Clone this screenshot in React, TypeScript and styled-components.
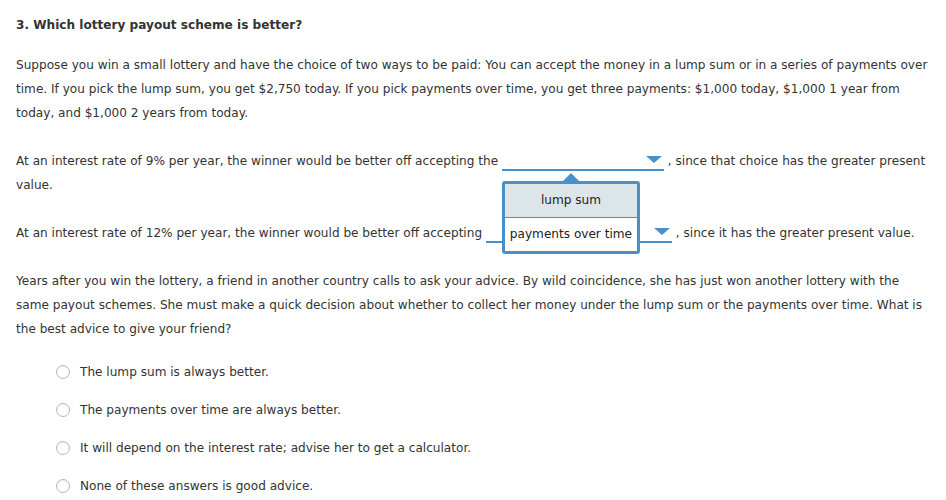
import * as React from "react";
import styled, { createGlobalStyle } from "styled-components";

const GlobalStyle = createGlobalStyle`
    html, body {
        margin: 0;
        padding: 0;
        background: #ffffff;
    }
    body {
        font-family: "DejaVu Sans", Verdana, sans-serif;
        font-size: 12.1px;
        color: #333333;
    }
`

const answers = [
    "The lump sum is always better.",
    "The payments over time are always better.",
    "It will depend on the interest rate; advise her to get a calculator.",
    "None of these answers is good advice."
];

interface DropdownProps {
    width: number;
    open?: boolean;
    options?: string[];
}

function Dropdown(props: DropdownProps) {
    return (
        <DropdownSpan $width={props.width}>
            <Caret />
            {props.open && props.options &&
                <Menu>
                    {props.options.map((o, i) => (
                        <MenuItem key={o} $selected={i === 0}>{o}</MenuItem>
                    ))}
                </Menu>
            }
        </DropdownSpan>
    );
}

export default class App extends React.Component {
    public render() {
        return (
            <Page>
                <GlobalStyle />
                <Title>3. Which lottery payout scheme is better?</Title>

                <Para>
                    Suppose you win a small lottery and have the choice of two ways to be paid: You can accept the money in a lump sum or in a series of payments over time. If you pick the lump sum, you get $2,750 today. If you pick payments over time, you get three payments: $1,000 today, $1,000 1 year from today, and $1,000 2 years from today.
                </Para>

                <Para>
                    At an interest rate of 9% per year, the winner would be better off accepting the{" "}
                    <Dropdown width={162} open options={["lump sum", "payments over time"]} />
                    {" "}, since that choice has the greater present value.
                </Para>

                <Para>
                    At an interest rate of 12% per year, the winner would be better off accepting{" "}
                    <Dropdown width={186} />
                    {" "}, since it has the greater present value.
                </Para>

                <Para>
                    Years after you win the lottery, a friend in another country calls to ask your advice. By wild coincidence, she has just won another lottery with the same payout schemes. She must make a quick decision about whether to collect her money under the lump sum or the payments over time. What is the best advice to give your friend?
                </Para>

                <AnswerList>
                    {answers.map(a => (
                        <AnswerRow key={a}>
                            <Radio />
                            <span>{a}</span>
                        </AnswerRow>
                    ))}
                </AnswerList>
            </Page>
        );
    }
}

const Page = styled.div`
    padding: 13px 16px 0 16px;
    width: 914px;
    line-height: 24px;
`

const Title = styled.div`
    font-weight: bold;
    margin-bottom: 16px;
`

const Para = styled.div`
    margin-bottom: 24px;
`

const DropdownSpan = styled.span<{ $width: number }>`
    position: relative;
    display: inline-block;
    vertical-align: -6px;
    width: ${p => p.$width}px;
    height: 16px;
    border-bottom: 2px solid #4a90c8;
`

const Caret = styled.span`
    position: absolute;
    right: 2px;
    top: 3px;
    width: 0;
    height: 0;
    border-left: 8px solid transparent;
    border-right: 8px solid transparent;
    border-top: 7px solid #4a90c8;
`

const Menu = styled.div`
    position: absolute;
    left: 0;
    top: 28px;
    width: 138px;
    box-sizing: border-box;
    border: 3px solid #4a90c8;
    border-radius: 3px;
    background: #ffffff;
    z-index: 10;

    &:before {
        content: "";
        position: absolute;
        left: 58px;
        top: -11px;
        border-left: 8px solid transparent;
        border-right: 8px solid transparent;
        border-bottom: 8px solid #4a90c8;
    }
`

const MenuItem = styled.div<{ $selected: boolean }>`
    text-align: center;
    line-height: 33px;
    height: 33px;
    background: ${p => p.$selected ? "#dce6ea" : "#ffffff"};
    border-bottom: ${p => p.$selected ? "1px solid #4a90c8" : "none"};
    white-space: nowrap;
    color: #222222;
`

const AnswerList = styled.div`
    display: flex;
    flex-direction: column;
    gap: 14px;
    padding-left: 40px;
    margin-top: -5px;
`

const AnswerRow = styled.label`
    display: flex;
    align-items: center;
    gap: 10px;
`

const Radio = styled.span`
    width: 12px;
    height: 12px;
    border: 1px solid #b8b8b8;
    border-radius: 50%;
    background: #ffffff;
    box-shadow: inset 0 1px 2px rgba(0, 0, 0, 0.08);
`
